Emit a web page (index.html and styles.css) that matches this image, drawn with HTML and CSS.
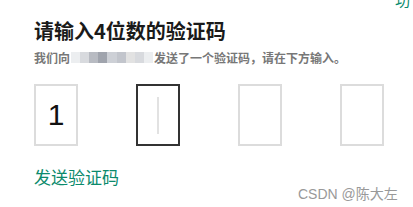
FILE: index.html
```html
<!DOCTYPE html>
<html>
<head>
    <title>验证码</title>
    <link rel="stylesheet" href="styles.css">
</head>
<body>
    <span class="corner">功</span>
    <section class="page">
        <h1>请输入4位数的验证码</h1>
        <p class="tip">我们向<span class="mask"><i class="m1"></i><i class="m2"></i><i class="m3"></i><i class="m4"></i><i class="m5"></i><i class="m6"></i><i class="m7"></i><i class="m2"></i><i class="m1"></i></span>发送了一个验证码，请在下方输入。</p>
        <section class="codes">
            <div class="box">1</div>
            <div class="box active"><span class="caret"></span></div>
            <div class="box"></div>
            <div class="box"></div>
        </section>
        <a class="resend">发送验证码</a>
    </section>
    <span class="mark">CSDN @陈大左</span>
</body>
</html>
```
FILE: styles.css
```css
body {
    margin: 0;
    background-color: #fff;
    font-family: "Noto Sans CJK SC", "Noto Sans", sans-serif;
    width: 413px;
    height: 207px;
    overflow: hidden;
    position: relative;
}
.page {
    padding: 16px 0 0 34px;
}
h1 {
    margin: 0;
    font-size: 20px;
    font-weight: bold;
    color: #1a1a1a;
    line-height: 30px;
}
.tip {
    margin: 3px 0 0 0;
    font-size: 12px;
    font-weight: bold;
    color: #777;
    line-height: 17px;
    display: flex;
    align-items: center;
}
.mask {
    display: inline-flex;
    height: 11px;
    width: 82px;
    margin: 0 1px;
}
.mask i {
    flex: 1;
    height: 100%;
}
.m1 { background-color: #eceef0; }
.m2 { background-color: #d8dade; }
.m3 { background-color: #b8bbc2; }
.m4 { background-color: #a0a4ad; }
.m5 { background-color: #cdd0d6; }
.m6 { background-color: #c2c5cc; }
.m7 { background-color: #e2e2e2; }
.codes {
    display: flex;
    gap: 58px;
    margin-top: 18px;
}
.box {
    width: 40px;
    height: 58px;
    border: 2px solid #dcdcdc;
    display: flex;
    align-items: center;
    justify-content: center;
    font-family: "Liberation Sans", sans-serif;
    font-size: 30px;
    color: #111;
}
.box.active {
    border-color: #333;
}
.caret {
    width: 2px;
    height: 37px;
    background-color: #e2e2e2;
}
.resend {
    display: block;
    margin-top: 19px;
    font-size: 17px;
    color: #0b8a6c;
    line-height: 24px;
}
.mark {
    position: absolute;
    left: 298px;
    top: 183px;
    font-family: "Liberation Sans", "Noto Sans CJK SC", sans-serif;
    font-size: 14px;
    color: #999;
}
.corner {
    position: absolute;
    left: 395px;
    top: -11px;
    font-size: 15px;
    color: #0b8a6c;
}
```
